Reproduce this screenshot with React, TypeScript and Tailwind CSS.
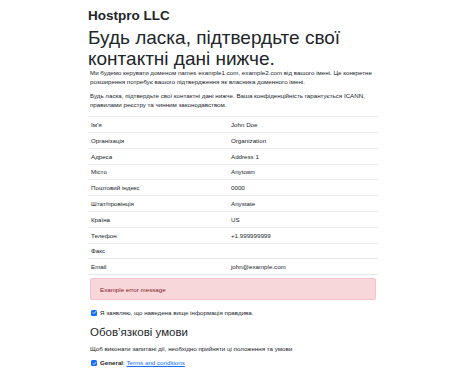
import React from "react";

const ROWS: [string, string][] = [
  ["Ім'я", "John Doe"],
  ["Організація", "Organization"],
  ["Адреса", "Address 1"],
  ["Місто", "Anytown"],
  ["Поштовий індекс", "0000"],
  ["Штат/провінція", "Anystate"],
  ["Країна", "US"],
  ["Телефон", "+1.999999999"],
  ["Факс", ""],
  ["Email", "john@example.com"],
];

function Check() {
  return (
    <span className="flex h-[6px] w-[6px] shrink-0 items-center justify-center rounded-[1.5px] bg-[#0d6efd]">
      <svg viewBox="0 0 16 16" className="h-[5px] w-[5px]">
        <path d="M3.5 8.5l3 3 6-7" fill="none" stroke="#fff" strokeWidth="2.6" strokeLinecap="round" strokeLinejoin="round" />
      </svg>
    </span>
  );
}

export default function App() {
  return (
    <div className="min-h-[374px] bg-white font-['Liberation_Sans',Arial,sans-serif] text-[#212529]">
      <div className="ml-[88px] w-[290px] pt-[8px]">
        <div className="text-[13.5px] font-bold leading-[15px]">Hostpro LLC</div>
        <h1 className="mt-[4px] text-[19px] leading-[21px]">
          Будь ласка, підтвердьте свої
          <br />
          контактні дані нижче.
        </h1>

        <p className="mt-[-1px] pl-[2px] text-[6.2px] leading-[9.3px]">
          Ми будемо керувати доменом names example1.com, example2.com від вашого імені. Це конкретне
          <br />
          розширення потребує вашого підтвердження як власника доменного імені.
        </p>
        <p className="mt-[4px] pl-[2px] text-[6.2px] leading-[9.3px]">
          Будь ласка, підтвердьте свої контактні дані нижче. Ваша конфіденційність гарантується ICANN,
          <br />
          правилами реєстру та чинним законодавством.
        </p>

        <div className="mt-[7px] border-t border-[#e5e7ea]">
          {ROWS.map(([label, value]) => (
            <div key={label} className="flex h-[15.8px] items-center border-b border-[#e5e7ea] px-[3px] text-[6.2px]">
              <span className="w-[140px] shrink-0">{label}</span>
              <span>{value}</span>
            </div>
          ))}
        </div>

        <div className="mx-[2px] mt-[3px] flex h-[22px] items-center rounded-[2px] border border-[#f5c2c7] bg-[#f8d7da] px-[9px] text-[6.2px] text-[#842029]">
          Example error message
        </div>

        <label className="mt-[8px] flex items-center gap-[3px] px-[3px] text-[6.2px]">
          <Check />
          Я заявляю, що наведена вище інформація правдива.
        </label>

        <h2 className="mt-[8px] pl-[2px] text-[11.5px] leading-[14px]">Обов’язкові умови</h2>
        <p className="mt-[5px] pl-[2px] text-[6.2px] leading-[9px]">
          Щоб виконати запитані дії, необхідно прийняти ці положення та умови
        </p>
        <label className="mt-[5px] flex items-center gap-[3px] px-[3px] text-[6.2px]">
          <Check />
          <span>
            <b>General</b>: <a className="text-[#0d6efd] underline">Terms and conditions</a>
          </span>
        </label>
      </div>
    </div>
  );
}
